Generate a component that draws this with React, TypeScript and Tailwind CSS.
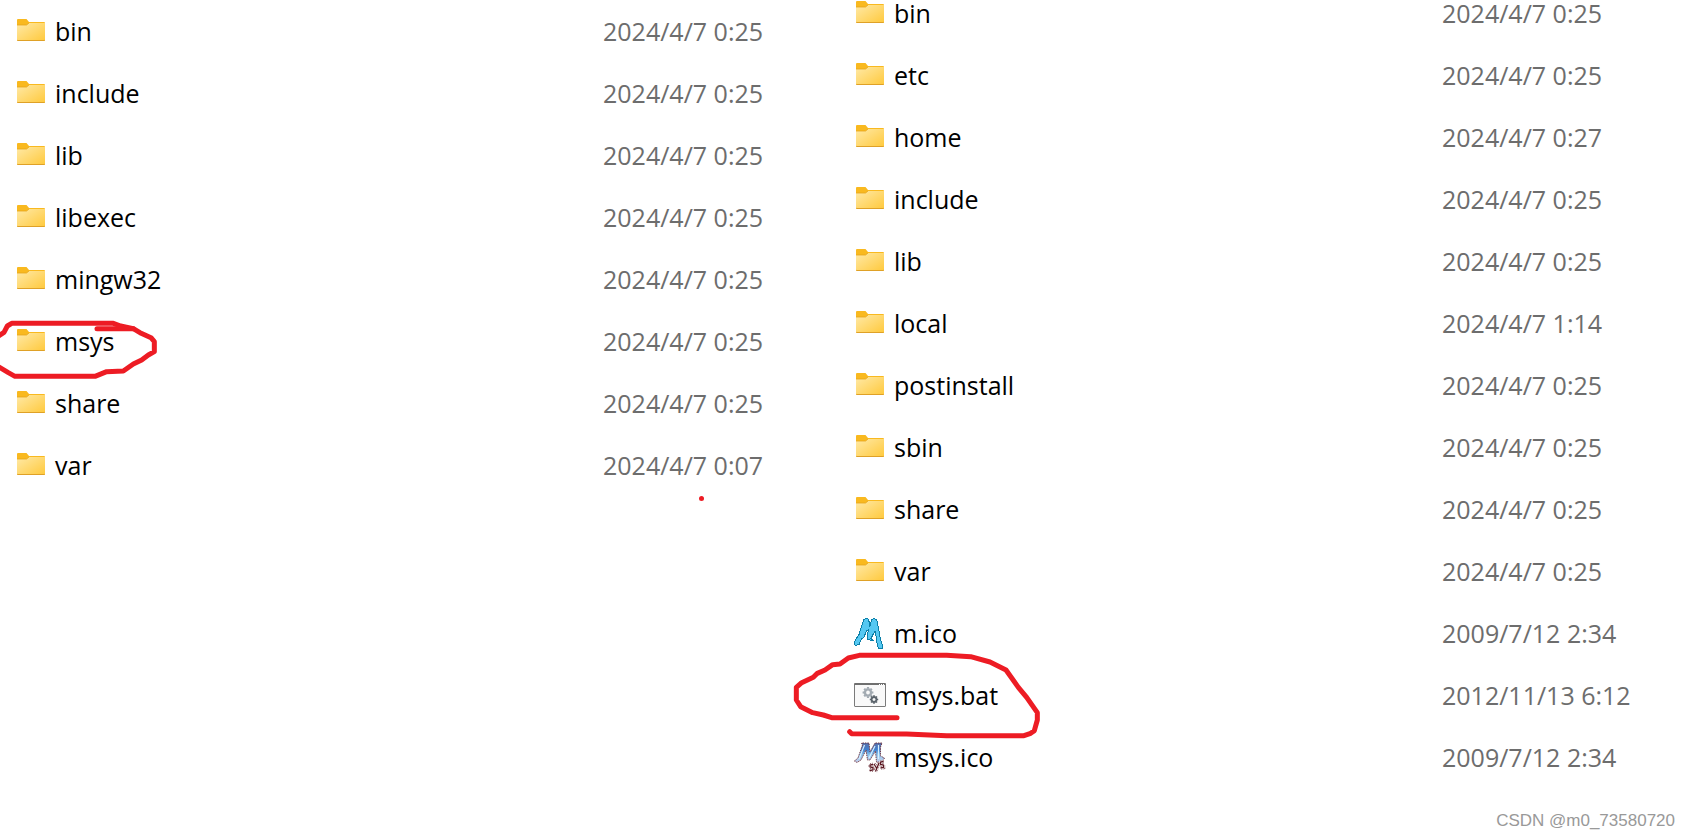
type Kind = "folder" | "m" | "bat" | "msys";
type Entry = { name: string; date: string; kind?: Kind };

const left: Entry[] = [
  { name: "bin", date: "2024/4/7 0:25" },
  { name: "include", date: "2024/4/7 0:25" },
  { name: "lib", date: "2024/4/7 0:25" },
  { name: "libexec", date: "2024/4/7 0:25" },
  { name: "mingw32", date: "2024/4/7 0:25" },
  { name: "msys", date: "2024/4/7 0:25" },
  { name: "share", date: "2024/4/7 0:25" },
  { name: "var", date: "2024/4/7 0:07" },
];

const right: Entry[] = [
  { name: "bin", date: "2024/4/7 0:25" },
  { name: "etc", date: "2024/4/7 0:25" },
  { name: "home", date: "2024/4/7 0:27" },
  { name: "include", date: "2024/4/7 0:25" },
  { name: "lib", date: "2024/4/7 0:25" },
  { name: "local", date: "2024/4/7 1:14" },
  { name: "postinstall", date: "2024/4/7 0:25" },
  { name: "sbin", date: "2024/4/7 0:25" },
  { name: "share", date: "2024/4/7 0:25" },
  { name: "var", date: "2024/4/7 0:25" },
  { name: "m.ico", date: "2009/7/12 2:34", kind: "m" },
  { name: "msys.bat", date: "2012/11/13 6:12", kind: "bat" },
  { name: "msys.ico", date: "2009/7/12 2:34", kind: "msys" },
];

function FolderIcon() {
  return (
    <svg viewBox="0 0 32 32" className="size-8 shrink-0" aria-hidden="true">
      <defs>
        <linearGradient id="folder" x1="0" y1="0" x2="1" y2="1">
          <stop offset="0" stopColor="#ffe9a6" />
          <stop offset="1" stopColor="#ffc93c" />
        </linearGradient>
      </defs>
      <path d="M2 4a1 1 0 0 1 1-1h8.500l2.500 3H29a1 1 0 0 1 1 1v6H2z" fill="#f9b91f" />
      <path d="M2 9h9.500L14 7h16v17a1 1 0 0 1-1 1H3a1 1 0 0 1-1-1z" fill="url(#folder)" />
      <path d="M2 9h9.500L14 7" fill="none" stroke="#e6a51c" strokeWidth="0.800" />
      <path d="M2 23.500v.500a1 1 0 0 0 1 1h26a1 1 0 0 0 1-1v-.500a1 1 0 0 1-1 .600H3a1 1 0 0 1-1-.600z" fill="#dfa127" />
    </svg>
  );
}

const M_SHAPE =
  "M0.500 23.500L5 16.500L7.500 8L10 1.500L12 0.500L14 1L15 3.500V8H16L17.500 1.500L20 0.500L22.500 1.500L23.500 5L25 13L26.500 22L28.500 27V30.500H24.500L23 25L22 18L21 13L18.500 17.500L17 20.500L19 22.500L13 21.500V18.500L14.500 11.500L12.500 13L10 19L7.500 21L5 26.500L1.500 27.500L0.500 26.500Z";

function MIcon() {
  return (
    <svg viewBox="0 0 32 32" className="size-8 shrink-0" shapeRendering="crispEdges" aria-hidden="true">
      <path d={M_SHAPE} fill="#55c8f2" stroke="#0b7fa8" />
    </svg>
  );
}

function Gear({ x, y, r, color }: { x: number; y: number; r: number; color: string }) {
  return (
    <g transform={`translate(${x} ${y})`} fill="none" stroke={color}>
      <circle r={r * 0.58} strokeWidth={r * 0.46} />
      {[0, 45, 90, 135].map((a) => (
        <path
          key={a}
          d={`M0 ${-r}V${-r * 0.7}M0 ${r * 0.7}V${r}`}
          strokeWidth={r * 0.4}
          transform={`rotate(${a})`}
        />
      ))}
    </g>
  );
}

function BatIcon() {
  return (
    <svg viewBox="0 0 32 32" className="size-8 shrink-0" aria-hidden="true">
      <rect x="0.500" y="3.500" width="31" height="23" rx="0.500" fill="#f9f9f9" stroke="#7b7b7b" />
      <path d="M0.500 4H31.500" stroke="#6f6f6f" strokeWidth="2" />
      <path d="M25 4.500h1M27 4.500h1M29 4.500h1" stroke="#fff" />
      <Gear x={14} y={12.5} r={5.4} color="#a3abb2" />
      <Gear x={20} y={19.5} r={4.2} color="#5b646c" />
    </svg>
  );
}

const SYS_STROKES =
  "M19 22.500l-3 .500v2l3 .500v2.500l-3.500 .500M20 22l2.500 4M25 21l-3.500 8.500M29.500 19.500l-3 .500v2.500l3 .500v2.500l-3 .500";

function MsysIcon() {
  return (
    <svg viewBox="0 0 32 32" className="size-8 shrink-0" aria-hidden="true">
      <defs>
        <linearGradient id="msys" x1="0" y1="0" x2="0" y2="1">
          <stop offset="0" stopColor="#5a6fa8" />
          <stop offset="0.350" stopColor="#3f7fd0" />
          <stop offset="0.600" stopColor="#8cc4ee" />
          <stop offset="1" stopColor="#c8d2ee" />
        </linearGradient>
      </defs>
      <path
        d="M0.500 19L4 16L8.500 3L7.500 1H15L16 10L21 1H28L26.500 5V14L30.500 16L28 20H22.500L21.500 9L16 18H13.500L12 8L7 18L3 20.500Z"
        fill="url(#msys)"
        stroke="#6b2a34"
        strokeWidth="0.900"
        strokeDasharray="1.500 0.900"
      />
      <path d="M10.500 3L5 17M24.500 3v14M21 4l-6 12" stroke="#d6efff" strokeWidth="1.200" fill="none" />
      <path d={SYS_STROKES} fill="none" stroke="#5a1620" strokeWidth="3.400" strokeDasharray="1 0.800" />
      <path d={SYS_STROKES} fill="none" stroke="#fff" strokeWidth="2.400" />
      <path d={SYS_STROKES} fill="none" stroke="#5a1620" strokeWidth="1.300" />
    </svg>
  );
}

function Icon({ kind = "folder" }: { kind?: Kind }) {
  if (kind === "m") return <MIcon />;
  if (kind === "bat") return <BatIcon />;
  if (kind === "msys") return <MsysIcon />;
  return <FolderIcon />;
}

function FileTable({ entries, label }: { entries: Entry[]; label: string }) {
  return (
    <table aria-label={label} className="w-full table-fixed border-collapse">
      <colgroup>
        <col />
        <col className="w-[236px]" />
      </colgroup>
      <tbody>
        {entries.map((e) => (
          <tr key={e.name} className="h-[62px]">
            <td className="p-0 pl-[15px]">
              <div className="flex items-center gap-2">
                <Icon kind={e.kind} />
                <span className="pb-0.5 text-black">{e.name}</span>
              </div>
            </td>
            <td className="whitespace-nowrap p-0 pb-0.5 text-[#6d6d6d]">{e.date}</td>
          </tr>
        ))}
      </tbody>
    </table>
  );
}

function LeftMarks() {
  return (
    <>
      <svg
        viewBox="0 0 540 300"
        className="pointer-events-none absolute left-0 top-[300px] h-[100px] w-[180px]"
        fill="none"
        stroke="#ed1c24"
        strokeWidth="15"
        strokeLinecap="round"
        strokeLinejoin="round"
        aria-hidden="true"
      >
        <path d="M-5 108L12 97L22 78L35 70H340L362 78L400 86L420 98L435 105L453 113L463 125V155L445 165L425 180L400 192L370 213L320 215L285 229H45L25 218L-5 200" />
        <path d="M291 86H400" />
      </svg>
      <span className="pointer-events-none absolute left-[699px] top-[496px] size-[5px] rounded-full bg-[#ed1c24]" />
    </>
  );
}

function RightMarks() {
  return (
    <svg
      viewBox="0 0 840 570"
      className="pointer-events-none absolute -left-[59px] top-[600px] h-[190px] w-[280px]"
      fill="none"
      stroke="#ed1c24"
      strokeWidth="15"
      strokeLinecap="round"
      strokeLinejoin="round"
      aria-hidden="true"
    >
      <path d="M351 353H155L130 345L98 338L62 320L49 300V262L65 248L100 232L112 220L135 210L158 194L180 192L205 174L238 166H500L572 170L630 186L678 210L715 262L740 292L772 338V360L763 392L752 400L732 407H500L380 402L215 401L209 395" />
    </svg>
  );
}

export default function App() {
  return (
    <main className="flex min-h-screen flex-col overflow-hidden bg-white font-['Open_Sans',sans-serif] text-[25px] leading-8">
      <div className="grid grow grid-cols-[839fr_850fr]">
        <section className="relative pt-px">
          <FileTable entries={left} label="mingw" />
          <LeftMarks />
        </section>
        <section className="relative pr-[11px]">
          <div className="-mt-[17px]">
            <FileTable entries={right} label="msys" />
          </div>
          <RightMarks />
        </section>
      </div>
      <footer className="pb-[5px] pr-[14px] text-right font-['Liberation_Sans',sans-serif] text-[17px] leading-6 text-[#999999]">
        CSDN @m0_73580720
      </footer>
    </main>
  );
}
